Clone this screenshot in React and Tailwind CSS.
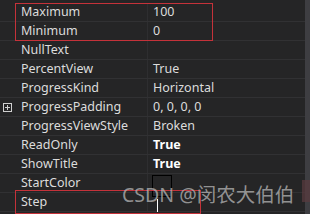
import React from 'react'

const rows = [
  { name: 'Maximum', value: '100' },
  { name: 'Minimum', value: '0' },
  { name: 'NullText', value: '' },
  { name: 'PercentView', value: 'True' },
  { name: 'ProgressKind', value: 'Horizontal' },
  { name: 'ProgressPadding', value: '0, 0, 0, 0', expand: true },
  { name: 'ProgressViewStyle', value: 'Broken' },
  { name: 'ReadOnly', value: 'True', bold: true },
  { name: 'ShowTitle', value: 'True', bold: true },
  { name: 'StartColor', value: '', swatch: true },
  { name: 'Step', value: '', caret: true },
]

const App = () => {
  return (
    <div
      className="relative w-[310px] h-[214px] overflow-hidden bg-[#252526] text-[#dcdcdc] text-[12.5px]"
      style={{ fontFamily: '"Noto Sans", "Noto Sans CJK SC", sans-serif' }}
    >
      <div className="flex h-full">
        {/* grid */}
        <div className="flex-1 pt-[3px]">
          {rows.map((r) => (
            <div key={r.name} className="flex h-[19px] border-b border-[#313133]">
              <div className="w-[15px] flex items-center justify-center">
                {r.expand && (
                  <div className="w-[9px] h-[9px] border border-[#d0d0d0] relative">
                    <div className="absolute left-[1px] right-[1px] top-[3px] h-px bg-[#d0d0d0]" />
                    <div className="absolute top-[1px] bottom-[1px] left-[3px] w-px bg-[#d0d0d0]" />
                  </div>
                )}
              </div>
              <div className="w-[133px] pl-[6px] flex items-center leading-none border-r border-[#2e2e30]">
                {r.name}
              </div>
              <div className={`flex-1 pl-[5px] flex items-center leading-none ${r.bold ? 'font-bold text-white' : ''}`}>
                {r.value}
                {r.swatch && <div className="w-[20px] h-[22px] border border-black -ml-[1px] self-start mt-[1px]" />}
                {r.caret && <div className="w-px h-[13px] bg-white ml-[4px] mt-[6px]" />}
              </div>
            </div>
          ))}
        </div>
        {/* scrollbar */}
        <div className="w-[5px] h-full bg-[#3e3e42]" />
      </div>

      {/* annotations */}
      <div className="absolute left-[15px] top-[3px] w-[198px] h-[38px] border border-[#c5323a]" />
      <div className="absolute left-[15px] top-[190px] w-[186px] h-[24px] border border-[#c5323a]" />

      {/* watermark */}
      <div className="absolute left-[122px] top-[185px] text-[19.5px] leading-none text-[#b0b0b0]/80 whitespace-nowrap">
        CSDN @闵农大伯伯
      </div>
      <div className="absolute right-0 top-[180px] w-[8px] h-[22px] bg-[#5a3a3e]/70" />
    </div>
  )
}

export default App
